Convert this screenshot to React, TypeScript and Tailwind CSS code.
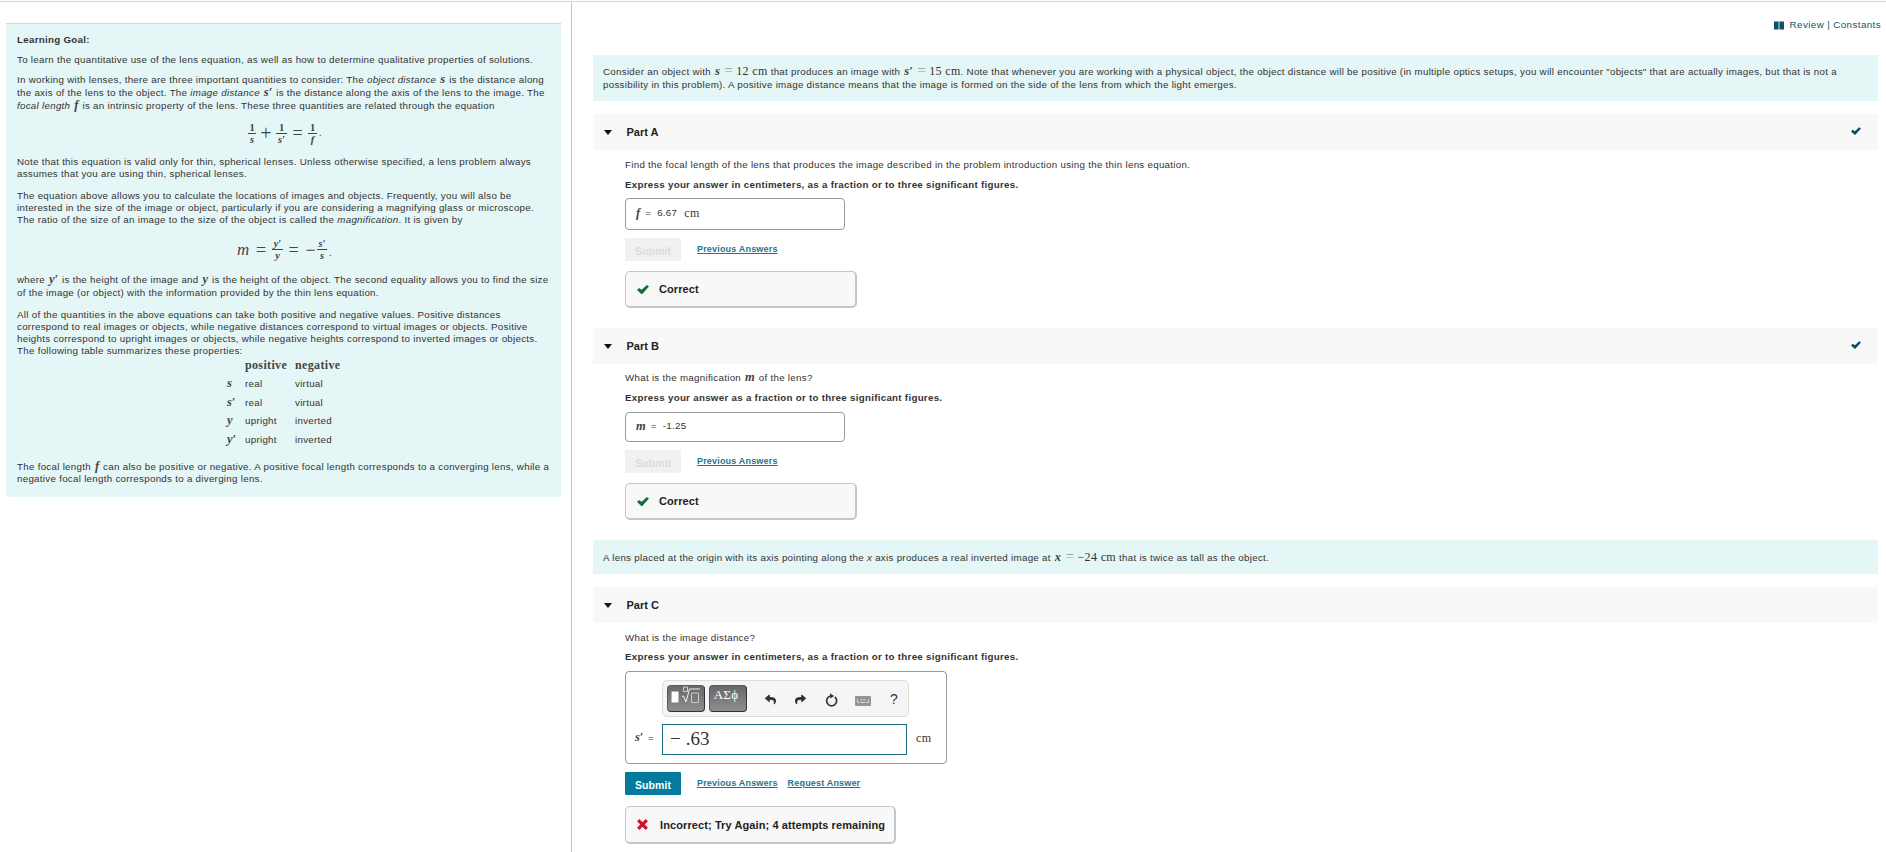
import { ReactNode } from 'react';
import { FaReply, FaShare } from 'react-icons/fa';

const SERIF = "font-['Liberation_Serif','Times_New_Roman',serif]";

const Line = ({ children, className = '' }: { children: ReactNode; className?: string }) => (
    <span className={`block whitespace-nowrap ${className}`}>{children}</span>
);

const Sym = ({ children }: { children: ReactNode }) => (
    <span className={`${SERIF} mx-px text-[12.5px] leading-[0] font-bold tracking-normal text-[#444] italic`}>{children}</span>
);

const Num = ({ children }: { children: ReactNode }) => (
    <span className={`${SERIF} text-xs leading-[0] tracking-[0.35px]`}>{children}</span>
);

// Relation sign used inside running text
const Op = ({ children }: { children: ReactNode }) => (
    <span className={`${SERIF} mx-[3.5px] text-[15px] leading-[0] tracking-normal text-[#8a9a9a]`}>{children}</span>
);

const Frac = ({ top, bottom, italicTop = false }: { top: string; bottom: string; italicTop?: boolean }) => (
    <span className="flex flex-col items-center text-[10.5px] leading-[9px] font-bold text-[#444]">
        <span className={italicTop ? 'italic' : ''}>{top}</span>
        <span className="my-px h-px w-full bg-[#444]" />
        <span className="italic">{bottom}</span>
    </span>
);

const Caret = () => (
    <svg width="8" height="5" viewBox="0 0 8 5" fill="#111">
        <path d="M0 0h8L4 5z" />
    </svg>
);

const Check = ({ className }: { className: string }) => (
    <svg viewBox="0 0 12 9" className={className} fill="currentColor">
        <path d="M0 5L2 3l2.600 1.800L9.900 0 12 1.400 5.300 9H4.300z" />
    </svg>
);

const Cross = ({ className }: { className: string }) => (
    <svg viewBox="0 0 11 11" className={className} fill="none" stroke="currentColor" strokeWidth="3.2">
        <path d="M1.200 1.200l8.600 8.600M9.800 1.200L1.200 9.800" />
    </svg>
);

const Book = () => (
    <svg width="10" height="9" viewBox="0 0 10 9" fill="currentColor">
        <path d="M0 .5h4.600V8.500H0zM5.400.5H10V8.500H5.400z" />
    </svg>
);

const rows = [
    { sym: 's', positive: 'real', negative: 'virtual' },
    { sym: 's′', positive: 'real', negative: 'virtual' },
    { sym: 'y', positive: 'upright', negative: 'inverted' },
    { sym: 'y′', positive: 'upright', negative: 'inverted' },
];

const LearningGoal = () => (
    <section className="h-[474px] w-[555px] border-t border-[#c9dadb] bg-[#e5f6f6] pt-2.5 pl-[11px]">
        <h2 className="font-bold">Learning Goal:</h2>
        <p className="mt-2">
            <Line>To learn the quantitative use of the lens equation, as well as how to determine qualitative properties of solutions.</Line>
        </p>
        <p className="mt-[7px] leading-[13px]">
            <Line>In working with lenses, there are three important quantities to consider: The <i>object distance</i> <Sym>s</Sym> is the distance along</Line>
            <Line>the axis of the lens to the object. The <i>image distance</i> <Sym>s′</Sym> is the distance along the axis of the lens to the image. The</Line>
            <Line><i>focal length</i> <Sym>f</Sym> is an intrinsic property of the lens. These three quantities are related through the equation</Line>
        </p>
        <div className={`flex h-[42px] items-center pl-[231px] text-[17px] tracking-normal text-[#444] ${SERIF}`}>
            <span className="w-[8px]"><Frac top="1" bottom="s" /></span>
            <span className="w-5 text-center text-[20px]">+</span>
            <span className="w-[11px]"><Frac top="1" bottom="s′" /></span>
            <span className="w-[21px] text-center text-[18px]">=</span>
            <span className="w-[9px]"><Frac top="1" bottom="f" /></span>
            <span className="ml-0.5 text-[10px]">.</span>
        </div>
        <p className="mt-[2px]">
            <Line>Note that this equation is valid only for thin, spherical lenses. Unless otherwise specified, a lens problem always</Line>
            <Line>assumes that you are using thin, spherical lenses.</Line>
        </p>
        <p className="mt-2.5">
            <Line>The equation above allows you to calculate the locations of images and objects. Frequently, you will also be</Line>
            <Line>interested in the size of the image or object, particularly if you are considering a magnifying glass or microscope.</Line>
            <Line>The ratio of the size of an image to the size of the object is called the <i>magnification</i>. It is given by</Line>
        </p>
        <div className={`flex h-[47px] items-center pl-[220px] text-[18px] tracking-normal text-[#444] ${SERIF}`}>
            <i className="w-[13px] text-[17px]">m</i>
            <span className="w-[22px] text-center">=</span>
            <span className="w-[11px]"><Frac top="y′" bottom="y" italicTop /></span>
            <span className="w-[21px] text-center">=</span>
            <span className="w-[13px] text-center">−</span>
            <span className="w-[10px]"><Frac top="s′" bottom="s" italicTop /></span>
            <span className="ml-0.5 pt-1.5 text-[10px]">.</span>
        </div>
        <p className="leading-[13px]">
            <Line>where <Sym>y′</Sym> is the height of the image and <Sym>y</Sym> is the height of the object. The second equality allows you to find the size</Line>
            <Line>of the image (or object) with the information provided by the thin lens equation.</Line>
        </p>
        <p className="mt-[9.5px]">
            <Line>All of the quantities in the above equations can take both positive and negative values. Positive distances</Line>
            <Line>correspond to real images or objects, while negative distances correspond to virtual images or objects. Positive</Line>
            <Line>heights correspond to upright images or objects, while negative heights correspond to inverted images or objects.</Line>
            <Line>The following table summarizes these properties:</Line>
        </p>
        <table className="ml-[209px]">
            <thead>
                <tr className={`h-[18px] text-left align-top text-xs leading-4 tracking-[0.35px] text-[#444] ${SERIF}`}>
                    <th className="w-[19px]" />
                    <th className="w-[50px] font-bold">positive</th>
                    <th className="font-bold">negative</th>
                </tr>
            </thead>
            <tbody>
                {rows.map((row) => (
                    <tr key={row.sym} className="h-[18.7px]">
                        <td><Sym>{row.sym}</Sym></td>
                        <td>{row.positive}</td>
                        <td>{row.negative}</td>
                    </tr>
                ))}
            </tbody>
        </table>
        <p className="mt-3">
            <Line>The focal length <Sym>f</Sym> can also be positive or negative. A positive focal length corresponds to a converging lens, while a</Line>
            <Line>negative focal length corresponds to a diverging lens.</Line>
        </p>
    </section>
);

const PartHeader = ({ title, done = false }: { title: string; done?: boolean }) => (
    <header className="flex h-9 items-center bg-[#f8f8f8] pr-[17px] pl-[11px]">
        <Caret />
        <h3 className="ml-[14.5px] text-[11px] font-bold tracking-normal text-[#222]">{title}</h3>
        {done && <Check className="mb-0.5 ml-auto h-2 w-2.5 text-[#0b4f60]" />}
    </header>
);

const Actions = ({ disabled = false, links }: { disabled?: boolean; links: string[] }) => (
    <div className="flex h-[23px] items-center">
        <button className={`h-full w-14 pt-0.5 text-[10.5px] font-bold tracking-[0.1px] ${disabled ? 'bg-[#f1f1f1] text-[#dcdcdc]' : 'rounded-[1px] bg-[#047a9c] text-white'}`}>
            Submit
        </button>
        <div className="mb-0.5 ml-4 flex gap-2.5">
            {links.map((link) => (
                <a key={link} href="#" className="text-[9px] font-bold tracking-[0.18px] text-[#1f7590] underline">{link}</a>
            ))}
        </div>
    </div>
);

const Feedback = ({ ok = false, children, className }: { ok?: boolean; children: ReactNode; className: string }) => (
    <div className={`flex items-center rounded-[5px] border border-r-2 border-b-2 border-[#c4c6c8] bg-[#f8f8f8] pl-[11px] text-[11px] font-bold tracking-[0.1px] text-[#222] ${className}`}>
        {ok ? <Check className="h-[9px] w-3 text-[#10703c]" /> : <Cross className="size-[11px] text-[#d00f2b]" />}
        <span className={ok ? 'ml-[10px] pb-px' : 'ml-3 pt-px'}>{children}</span>
    </div>
);

const Answer = ({ symbol, value, unit, className }: { symbol: string; value: string; unit?: string; className: string }) => (
    <div className={`flex w-[220px] items-center rounded border border-[#999] pb-0.5 pl-[9px] ${className}`}>
        <Sym>{symbol}</Sym>
        <span className="mr-1.5 ml-1">=</span>
        <span>{value}</span>
        {unit && <span className={`ml-[7px] text-xs tracking-[0.4px] ${SERIF}`}>{unit}</span>}
    </div>
);

const TOOL_BUTTON = 'h-[27px] w-[38px] rounded border border-[#5a5a5c] border-r-[#333] border-b-[#333] bg-linear-to-b from-[#69696b] to-[#8d8d8f]';

const Toolbar = () => (
    <div className="flex h-[37px] w-[247px] items-center rounded-[5px] border border-[#dcdcdc] bg-[#f5f5f5] pl-[4px]">
        <button className={TOOL_BUTTON}>
            <svg width="36" height="25" viewBox="1 1 36 25" fill="none" stroke="#fff">
                <path d="M4.500 6.500h7v11h-7z" fill="#fff" stroke="none" />
                <path d="M15 11.500l1.500-.5 2.500 6 3.500-13H33" stroke="#eee" />
                <path d="M16.500 2h4v4.500h-4z" stroke="#ddd" strokeWidth=".9" />
                <path d="M24.500 8h7v9.500h-7z" stroke="#ccc" />
            </svg>
        </button>
        <button className={`ml-1 pr-1 pb-2 text-[13px] leading-none tracking-[0.3px] text-white ${TOOL_BUTTON} ${SERIF}`}>
            ΑΣϕ
        </button>
        <FaReply className="mt-0.5 ml-[18px] size-[11px] text-[#333]" />
        <FaShare className="mt-0.5 ml-[19px] size-[11px] text-[#333]" />
        <svg className="mt-0.5 ml-[19px]" width="13" height="14" viewBox="0 0 13 14" fill="none" stroke="#333" strokeWidth="1.7">
            <path d="M9.800 3.900A5 5 0 1 1 5.300 3" />
            <path d="M5 .2l4 2.700-3.800 2.700z" fill="#333" stroke="none" />
        </svg>
        <svg className="mt-1 ml-[17px]" width="16" height="10" viewBox="0 0 16 10">
            <rect width="16" height="10" rx="1" fill="#949494" />
            <path d="M2.500 3.500v3h2M5.500 4h2M8.500 4h2M11.500 6.500h2v-3M5.500 6.500h5" stroke="#ddd" fill="none" />
        </svg>
        <span className="ml-[19px] text-sm tracking-normal">?</span>
    </div>
);

export default function App() {
    return (
        <div className="mt-px flex h-[851px] w-[1886px] overflow-hidden border-t border-[#d0d5d6] bg-white font-['Liberation_Sans',Arial,sans-serif] text-[9.75px] leading-3 tracking-[0.285px] text-[#333]">
            <aside className="w-[572px] shrink-0 border-r border-[#bcc6ca] pt-[21px] pl-1.5">
                <LearningGoal />
            </aside>
            <main className="w-[1306px] shrink-0 pl-[21px]">
                <nav className="-mr-[3px] flex h-[53px] items-center justify-end pb-[7px] text-[#0b5566]">
                    <Book />
                    <span className="ml-1.5 tracking-[0.42px]">Review | Constants</span>
                </nav>
                <div className="h-[46px] bg-[#e5f6f6] pt-[10px] pl-2.5 leading-[13px]">
                    <Line>Consider an object with <Sym>s</Sym><Op>=</Op><Num>12 cm</Num> that produces an image with <Sym>s′</Sym><Op>=</Op><Num>15 cm</Num>. Note that whenever you are working with a physical object, the object distance will be positive (in multiple optics setups, you will encounter "objects" that are actually images, but that is not a</Line>
                    <Line>possibility in this problem). A positive image distance means that the image is formed on the side of the lens from which the light emerges.</Line>
                </div>
                <section className="mt-[13px] h-[214px]">
                    <PartHeader title="Part A" done />
                    <div className="pt-[9px] pl-8">
                        <Line>Find the focal length of the lens that produces the image described in the problem introduction using the thin lens equation.</Line>
                        <Line className="mt-2 font-bold">Express your answer in centimeters, as a fraction or to three significant figures.</Line>
                        <Answer symbol="f" value="6.67" unit="cm" className="mt-[7px] mb-2 h-8" />
                        <Actions disabled links={['Previous Answers']} />
                        <Feedback ok className="mt-2.5 h-[37px] w-[232px]">Correct</Feedback>
                    </div>
                </section>
                <section className="h-[212px]">
                    <PartHeader title="Part B" done />
                    <div className="pt-2 pl-8">
                        <Line>What is the magnification <Sym>m</Sym> of the lens?</Line>
                        <Line className="mt-2 font-bold">Express your answer as a fraction or to three significant figures.</Line>
                        <Answer symbol="m" value="-1.25" className="my-2 h-[30px]" />
                        <Actions disabled links={['Previous Answers']} />
                        <Feedback ok className="mt-2.5 h-[37px] w-[232px]">Correct</Feedback>
                    </div>
                </section>
                <div className="h-[34px] bg-[#e5f6f6] pt-3 pl-2.5">
                    <Line>A lens placed at the origin with its axis pointing along the <i>x</i> axis produces a real inverted image at <Sym>x</Sym><Op>=</Op><Num>−24 cm</Num> that is twice as tall as the object.</Line>
                </div>
                <section className="mt-[13px]">
                    <PartHeader title="Part C" />
                    <div className="pt-[9px] pl-8">
                        <Line>What is the image distance?</Line>
                        <Line className="mt-[7px] font-bold">Express your answer in centimeters, as a fraction or to three significant figures.</Line>
                        <div className="my-2 h-[93px] w-[322px] rounded border border-[#999] pt-2">
                            <div className="pl-9">
                                <Toolbar />
                            </div>
                            <div className="mt-[7px] flex items-center pl-2">
                                <span className="w-[14px] pb-1"><Sym>s′</Sym></span>
                                <span className="w-3.5 pb-1">=</span>
                                <div className={`flex h-[31px] w-[245px] items-center border border-[#1f6c85] pb-px pl-[7px] text-[19px] tracking-normal text-[#333] ${SERIF}`}>
                                    <span className="mr-[5px]">−</span>.63
                                </div>
                                <span className={`ml-[9px] pb-1 text-xs tracking-[0.4px] ${SERIF}`}>cm</span>
                            </div>
                        </div>
                        <Actions links={['Previous Answers', 'Request Answer']} />
                        <Feedback className="mt-[11px] h-[38px] w-[271px]">Incorrect; Try Again; 4 attempts remaining</Feedback>
                    </div>
                </section>
            </main>
        </div>
    );
}
